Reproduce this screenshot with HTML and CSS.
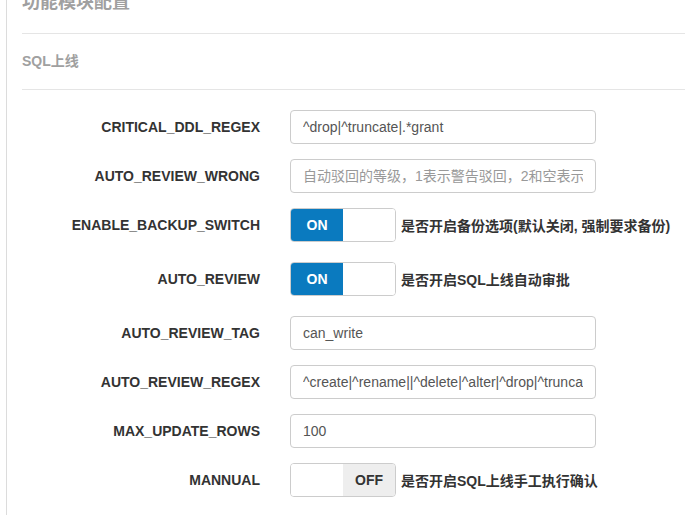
FILE: index.html
```html
<!DOCTYPE html>
<html lang="zh-CN">
<head>
<meta charset="utf-8">
<title>功能模块配置</title>
<link rel="stylesheet" href="styles.css">
</head>
<body>
<div class="panel">
  <h3 class="page-title">功能模块配置</h3>
  <div class="section-title">SQL上线</div>
  <form class="form">
    <div class="row">
      <label class="label">CRITICAL_DDL_REGEX</label>
      <div class="control"><input class="input" type="text" value="^drop|^truncate|.*grant"></div>
    </div>
    <div class="row">
      <label class="label">AUTO_REVIEW_WRONG</label>
      <div class="control"><input class="input" type="text" placeholder="自动驳回的等级，1表示警告驳回，2和空表示错误驳回"></div>
    </div>
    <div class="row row-switch">
      <label class="label">ENABLE_BACKUP_SWITCH</label>
      <div class="control">
        <span class="switch on"><span class="sw-on">ON</span><span class="sw-blank"></span></span>
        <span class="help">是否开启备份选项(默认关闭, 强制要求备份)</span>
      </div>
    </div>
    <div class="row row-switch">
      <label class="label">AUTO_REVIEW</label>
      <div class="control">
        <span class="switch on"><span class="sw-on">ON</span><span class="sw-blank"></span></span>
        <span class="help">是否开启SQL上线自动审批</span>
      </div>
    </div>
    <div class="row">
      <label class="label">AUTO_REVIEW_TAG</label>
      <div class="control"><input class="input" type="text" value="can_write"></div>
    </div>
    <div class="row">
      <label class="label">AUTO_REVIEW_REGEX</label>
      <div class="control"><input class="input" type="text" value="^create|^rename||^delete|^alter|^drop|^truncate"></div>
    </div>
    <div class="row">
      <label class="label">MAX_UPDATE_ROWS</label>
      <div class="control"><input class="input" type="text" value="100"></div>
    </div>
    <div class="row row-switch row-last">
      <label class="label">MANNUAL</label>
      <div class="control">
        <span class="switch off"><span class="sw-blank"></span><span class="sw-off">OFF</span></span>
        <span class="help">是否开启SQL上线手工执行确认</span>
      </div>
    </div>
  </form>
</div>
</body>
</html>
```
FILE: styles.css
```css
html, body {
  margin: 0;
  padding: 0;
  background: #fff;
  overflow: hidden;
}
body {
  font-family: "Liberation Sans", Arial, "Noto Sans CJK SC", sans-serif;
  font-size: 14px;
  color: #333;
}
.panel {
  margin-left: 6px;
  margin-right: 1px;
  border-left: 1px solid #dcdcdc;
  padding-left: 15px;
  height: 528px;
  box-sizing: border-box;
}
.page-title {
  margin: -13px 0 0;
  font-size: 18px;
  line-height: 30px;
  font-weight: bold;
  color: #a0a0a0;
  padding-bottom: 16px;
  border-bottom: 1px solid #e5e5e5;
}
.section-title {
  font-size: 14px;
  line-height: 20px;
  font-weight: bold;
  color: #a0a0a0;
  padding: 17px 0 18px;
  border-bottom: 1px solid #e5e5e5;
}
.form {
  margin: 20px 0 0;
}
.row {
  display: grid;
  grid-template-columns: 238px 1fr;
  column-gap: 30px;
  align-items: center;
  margin-bottom: 15px;
}
.row-switch {
  margin-bottom: 20px;
}
.row-last {
  margin-bottom: 0;
}
.label {
  text-align: right;
  font-weight: bold;
  font-size: 14px;
  color: #333;
  white-space: nowrap;
}
.control {
  display: flex;
  align-items: center;
  gap: 5px;
}
.input {
  box-sizing: border-box;
  width: 306px;
  height: 34px;
  padding: 6px 12px;
  border: 1px solid #ccc;
  border-radius: 4px;
  font-family: "Liberation Sans", Arial, "Noto Sans CJK SC", sans-serif;
  font-size: 14px;
  color: #555;
  background: #fff;
  outline: none;
}
.input::placeholder {
  color: #999;
}
.switch {
  box-sizing: border-box;
  display: flex;
  width: 106px;
  height: 34px;
  border: 1px solid #ccc;
  border-radius: 4px;
  overflow: hidden;
  flex-shrink: 0;
}
.sw-on, .sw-off, .sw-blank {
  width: 52px;
  display: flex;
  align-items: center;
  justify-content: center;
  font-weight: bold;
  font-size: 14px;
}
.sw-on {
  background: #0a7abf;
  color: #fff;
}
.sw-off {
  background: #eee;
  color: #333;
}
.sw-blank {
  background: #fff;
}
.help {
  font-weight: bold;
  font-size: 14px;
  color: #333;
  white-space: nowrap;
}
```
